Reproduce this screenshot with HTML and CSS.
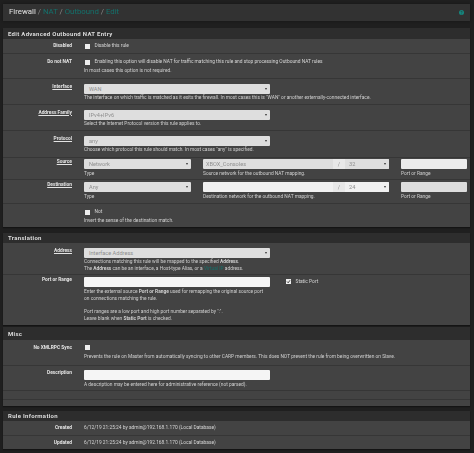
FILE: index.html
```html
<!DOCTYPE html>
<html lang="en">
<head>
<meta charset="utf-8">
<title>Firewall / NAT / Outbound / Edit</title>
<link rel="stylesheet" href="styles.css">
</head>
<body>
<header class="crumbs">
  <div class="trail"><span class="root">Firewall</span> <i>/</i> <a>NAT</a> <i>/</i> <a>Outbound</a> <i>/</i> <a>Edit</a></div>
  <svg class="help-icon" viewBox="0 0 10 10"><circle cx="5" cy="5" r="5" fill="#16877f"/><path d="M3.6 4a1.4 1.4 0 1 1 2 1.3c-.5.3-.6.5-.6 1" fill="none" stroke="#2b2b2b" stroke-width="1"/><circle cx="5" cy="7.9" r=".6" fill="#2b2b2b"/></svg>
</header>

<section class="panel p1">
  <h2>Edit Advanced Outbound NAT Entry</h2>
  <div class="row h-disabled"><label>Disabled</label><div class="ctl"><div class="check"><b class="box"></b>Disable this rule</div></div></div>
  <div class="row h-nonat"><label>Do not NAT</label><div class="ctl"><div class="check"><b class="box"></b>Enabling this option will disable NAT for traffic matching this rule and stop processing Outbound NAT rules</div><p>In most cases this option is not required.</p></div></div>
  <div class="row h-sel"><label class="req">Interface</label><div class="ctl"><div class="select">WAN</div><p>The interface on which traffic is matched as it exits the firewall. In most cases this is "WAN" or another externally-connected interface.</p></div></div>
  <div class="row h-sel"><label class="req">Address Family</label><div class="ctl"><div class="select">IPv4+IPv6</div><p>Select the Internet Protocol version this rule applies to.</p></div></div>
  <div class="row h-proto"><label class="req">Protocol</label><div class="ctl"><div class="select">any</div><p>Choose which protocol this rule should match. In most cases "any" is specified.</p></div></div>
  <div class="row h-net"><label class="req">Source</label><div class="ctl triple">
    <div><div class="select small">Network</div><p>Type</p></div>
    <div><div class="group grey"><span class="in">XBOX_Consoles</span><span class="slash">/</span><div class="select mask">32</div></div><p>Source network for the outbound NAT mapping.</p></div>
    <div><div class="input light"></div><p>Port or Range</p></div>
  </div></div>
  <div class="row h-net2"><label class="req">Destination</label><div class="ctl triple">
    <div><div class="select small">Any</div><p>Type</p></div>
    <div><div class="group"><span class="in"></span><span class="slash">/</span><div class="select mask">24</div></div><p>Destination network for the outbound NAT mapping.</p></div>
    <div><div class="input grey"></div><p>Port or Range</p></div>
  </div></div>
  <div class="row h-not"><label></label><div class="ctl"><div class="check"><b class="box"></b>Not</div><p>Invert the sense of the destination match.</p></div></div>
</section>

<section class="panel p2">
  <h2>Translation</h2>
  <div class="row h-addr"><label class="req">Address</label><div class="ctl"><div class="select">Interface Address</div><p>Connections matching this rule will be mapped to the specified <b>Address</b>.<br>The <b>Address</b> can be an interface, a Host-type Alias, or a <a>Virtual IP</a> address.</p></div></div>
  <div class="row h-port"><label>Port or Range</label><div class="ctl"><div class="port-line"><div class="input white wide"></div><div class="check"><b class="box on"><svg viewBox="0 0 10 10"><path d="M2 5l2.4 2.6L8 2.5" fill="none" stroke="#333" stroke-width="1.8"/></svg></b>Static Port</div></div><p>Enter the external source <b>Port or Range</b> used for remapping the original source port<br>on connections matching the rule.<br><br>Port ranges are a low port and high port number separated by ":".<br>Leave blank when <b>Static Port</b> is checked.</p></div></div>
</section>

<section class="panel p3">
  <h2>Misc</h2>
  <div class="row h-sync"><label>No XMLRPC Sync</label><div class="ctl"><div class="check"><b class="box"></b></div><p>Prevents the rule on Master from automatically syncing to other CARP members. This does NOT prevent the rule from being overwritten on Slave.</p></div></div>
  <div class="row h-desc"><label>Description</label><div class="ctl"><div class="input white wide"></div><p>A description may be entered here for administrative reference (not parsed).</p></div></div>
  <div class="row h-blank1"></div>
  <div class="row h-blank2"></div>
</section>

<section class="panel p4">
  <h2>Rule Information</h2>
  <div class="row h-info"><label>Created</label><div class="ctl"><div class="check">6/12/19 21:25:24 by admin@192.168.1.170 (Local Database)</div></div></div>
  <div class="row h-info"><label>Updated</label><div class="ctl"><div class="check">6/12/19 21:25:24 by admin@192.168.1.170 (Local Database)</div></div></div>
</section>
</body>
</html>
```
FILE: styles.css
```css
* { box-sizing: border-box; }
html, body { margin: 0; padding: 0; }
html { background: #1f1f1f; }
body {
  width: 474px;
  height: 453px;
  overflow: hidden;
  padding: 4px 4px 0 3px;
  font-family: Roboto, "Open Sans", "Liberation Sans", sans-serif;
  font-size: 4.85px;
  line-height: 6.8px;
  color: #d6d6d6;
  filter: blur(.3px);
}
.crumbs {
  height: 17px;
  background: #323232;
  display: flex;
  align-items: center;
  justify-content: space-between;
  padding: 0 6px;
  margin-bottom: 7px;
  box-shadow: 0 0 2px #151515;
}
.trail { font-size: 7.8px; color: #8a8a8a; }
.trail .root { color: #e2e2e2; }
.trail a { color: #14716c; }
.trail i { font-style: normal; }
.help-icon { width: 5px; height: 5px; }
.panel {
  background: #434343;
  box-shadow: 0 1px 1px #141414;
}
.panel h2 {
  margin: 0;
  height: 11px;
  padding-left: 5px;
  background: #2d2d2d;
  color: #dcdcdc;
  font-size: 6px;
  line-height: 11px;
  font-weight: 700;
  letter-spacing: .3px;
}
.p2 { margin-top: 6px; }
.p2 h2 { height: 10px; line-height: 10px; }
.p3 { margin-top: 2px; }
.p4 { margin-top: 5px; }
.p4 h2 { height: 10px; line-height: 10px; }
.p3 h2 { height: 13px; line-height: 13px; }
.row {
  display: flex;
  border-top: 1px solid #363636;
  padding-top: 4px;
}
.panel h2 + .row { border-top: 0; }
.row label {
  flex: 0 0 69px;
  text-align: right;
  font-weight: 700;
  color: #e4e4e4;
  line-height: 6.8px;
}
.row label.req { text-decoration: underline; }
.ctl { margin-left: 12px; flex: 1; min-width: 0; padding-right: 3px; }
.ctl p { margin: 0; padding-top: 1.8px; color: #d0d0d0; }
.ctl p a { color: #14716c; }
.check { display: flex; align-items: center; height: 6.8px; }
.box { width: 5px; height: 5px; background: #eee; margin-right: 5px; margin-left: .5px; flex: none; display: block; }
.box svg { display: block; width: 5px; height: 5px; }
.select {
  width: 186px;
  height: 10px;
  background: #dedede;
  color: #8f8f8f;
  font-size: 5.6px;
  line-height: 10px;
  padding-left: 5px;
  position: relative;
  border-radius: 1px;
}
.select::after {
  content: "";
  position: absolute;
  right: 3px;
  top: 4px;
  border: 1.5px solid transparent;
  border-top: 2.2px solid #333;
  border-bottom: 0;
}
.select.small { width: 107px; }
.triple { display: grid; grid-template-columns: 107px 186px 66px; column-gap: 12px; }
.group { display: flex; height: 10px; background: #f1f1f1; color: #8f8f8f; font-size: 5.6px; line-height: 10px; border-radius: 1px; }
.group.grey { background: #dedede; }
.group .in { flex: 1; padding-left: 3px; }
.group .slash { flex: 0 0 12px; text-align: center; background: #e8e8e8; }
.group .select { width: 44px; background: inherit; padding-left: 4px; }
.input { height: 10px; border-radius: 1px; }
.input.light { background: #ececec; }
.input.grey { background: #dedede; }
.input.white { background: #f5f5f5; }
.input.wide { width: 186px; }
.port-line { display: flex; align-items: center; column-gap: 15px; }
.h-disabled { height: 14px; padding-top: 4.4px; }
.h-nonat { height: 25px; padding-top: 5px; }
.h-sel { height: 26px; padding-top: 4.5px; }
.h-proto { height: 27px; padding-top: 4.5px; }
.h-net { height: 22px; padding-top: 1.3px; }
.h-net2 { height: 24px; padding-top: 2.2px; }
.h-not { height: 24px; padding-top: 5px; }
.h-addr { height: 31px; padding-top: 4.5px; }
.h-port { height: 51px; padding-top: 2px; }
.h-sync { height: 25px; padding-top: 4.5px; }
.h-sync .ctl p { padding-top: 3px; }
.h-desc { height: 25px; padding-top: 3.8px; }
.h-blank1 { height: 9px; }
.h-blank2 { height: 7px; }
.h-info { height: 14px; padding-top: 4.4px; }
```
